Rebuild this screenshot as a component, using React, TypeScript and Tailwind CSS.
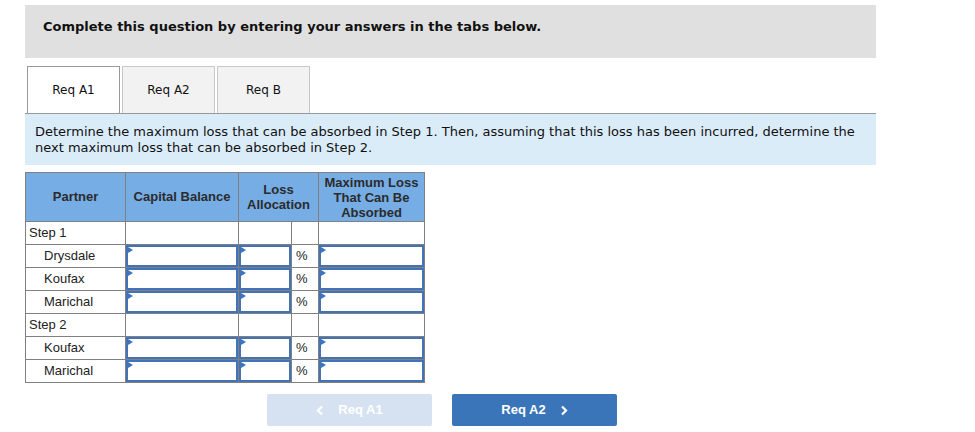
import React from 'react';

const rows: { label: string; indent: boolean; input: boolean }[] = [
  { label: 'Step 1', indent: false, input: false },
  { label: 'Drysdale', indent: true, input: true },
  { label: 'Koufax', indent: true, input: true },
  { label: 'Marichal', indent: true, input: true },
  { label: 'Step 2', indent: false, input: false },
  { label: 'Koufax', indent: true, input: true },
  { label: 'Marichal', indent: true, input: true },
];

function Field() {
  return (
    <div className="relative h-[22px] w-full border-2 border-[#4273b6] bg-white">
      <span className="absolute left-0 top-0 h-0 w-0 border-y-[3px] border-l-[5px] border-y-transparent border-l-[#3b74c0]" />
    </div>
  );
}

export default function App() {
  const cell = 'border border-[#808080] p-0 h-[23px]';
  return (
    <div className="min-h-screen bg-white pt-[5px] pl-[25px]" style={{ fontFamily: '"DejaVu Sans", Verdana, sans-serif' }}>
      <div className="w-[851px]">
        <div className="h-[53px] bg-[#e0e0e0] pl-[18px] pt-[14px] text-[13px] leading-[16px] font-bold text-[#111]">
          Complete this question by entering your answers in the tabs below.
        </div>

        <div className="mt-[8px] flex gap-[2px] border-b border-[#999] pl-[2px]">
          <div className="flex h-[47px] w-[93px] items-center justify-center border border-b-0 border-[#999] bg-white text-[12px] text-[#111]">
            Req A1
          </div>
          <div className="flex h-[47px] w-[93px] items-center justify-center border border-b-0 border-[#c8c8c8] bg-[#f2f2f2] text-[12px] text-[#111]">
            Req A2
          </div>
          <div className="flex h-[47px] w-[93px] items-center justify-center border border-b-0 border-[#c8c8c8] bg-[#f2f2f2] text-[12px] text-[#111]">
            Req B
          </div>
        </div>

        <div className="h-[51px] bg-[#dbecf9] px-[10px] pt-[10px] text-[13px] leading-[16px] text-[#111]">
          Determine the maximum loss that can be absorbed in Step 1. Then, assuming that this loss has been incurred, determine the
          next maximum loss that can be absorbed in Step 2.
        </div>

        <table
          className="mt-[7px] table-fixed border-collapse text-[13px] text-[#222]"
          style={{ fontFamily: '"Liberation Sans", Arial, sans-serif' }}
        >
          <colgroup>
            <col className="w-[100px]" />
            <col className="w-[113px]" />
            <col className="w-[53px]" />
            <col className="w-[27px]" />
            <col className="w-[106px]" />
          </colgroup>
          <thead>
            <tr className="h-[49px] bg-[#77ade5] font-bold text-[#2b2b2b]">
              <th className="border border-[#808080] font-bold">Partner</th>
              <th className="border border-[#808080] font-bold">Capital Balance</th>
              <th colSpan={2} className="border border-[#808080] font-bold leading-[15px]">
                Loss
                <br />
                Allocation
              </th>
              <th className="border border-[#808080] font-bold leading-[15px]">
                Maximum Loss
                <br />
                That Can Be
                <br />
                Absorbed
              </th>
            </tr>
          </thead>
          <tbody>
            {rows.map((r, i) => (
              <tr key={i} className="bg-white">
                <td className={`${cell} ${r.indent ? 'pl-[18px]' : 'pl-[3px]'}`}>{r.label}</td>
                <td className={cell}>{r.input && <Field />}</td>
                <td className={cell}>{r.input && <Field />}</td>
                <td className={`${cell} pl-[4px]`}>{r.input ? '%' : ''}</td>
                <td className={cell}>{r.input && <Field />}</td>
              </tr>
            ))}
          </tbody>
        </table>

        <div
          className="mt-[11px] ml-[242px] flex gap-[20px] text-[13px] font-bold text-white"
          style={{ fontFamily: '"Liberation Sans", Arial, sans-serif' }}
        >
          <div className="flex h-[32px] w-[165px] items-center justify-center gap-[14px] rounded-[2px] bg-[#d6e2f1]">
            <svg width="8" height="11" viewBox="0 0 8 11" fill="none">
              <path d="M6 1.5 2 5.5l4 4" stroke="white" strokeWidth="2.2" />
            </svg>
            <span>Req A1</span>
          </div>
          <div className="flex h-[32px] w-[165px] items-center justify-center gap-[14px] rounded-[2px] bg-[#3a75b9]">
            <span>Req A2</span>
            <svg width="8" height="11" viewBox="0 0 8 11" fill="none">
              <path d="M2 1.5l4 4-4 4" stroke="white" strokeWidth="2.2" />
            </svg>
          </div>
        </div>
      </div>
    </div>
  );
}
